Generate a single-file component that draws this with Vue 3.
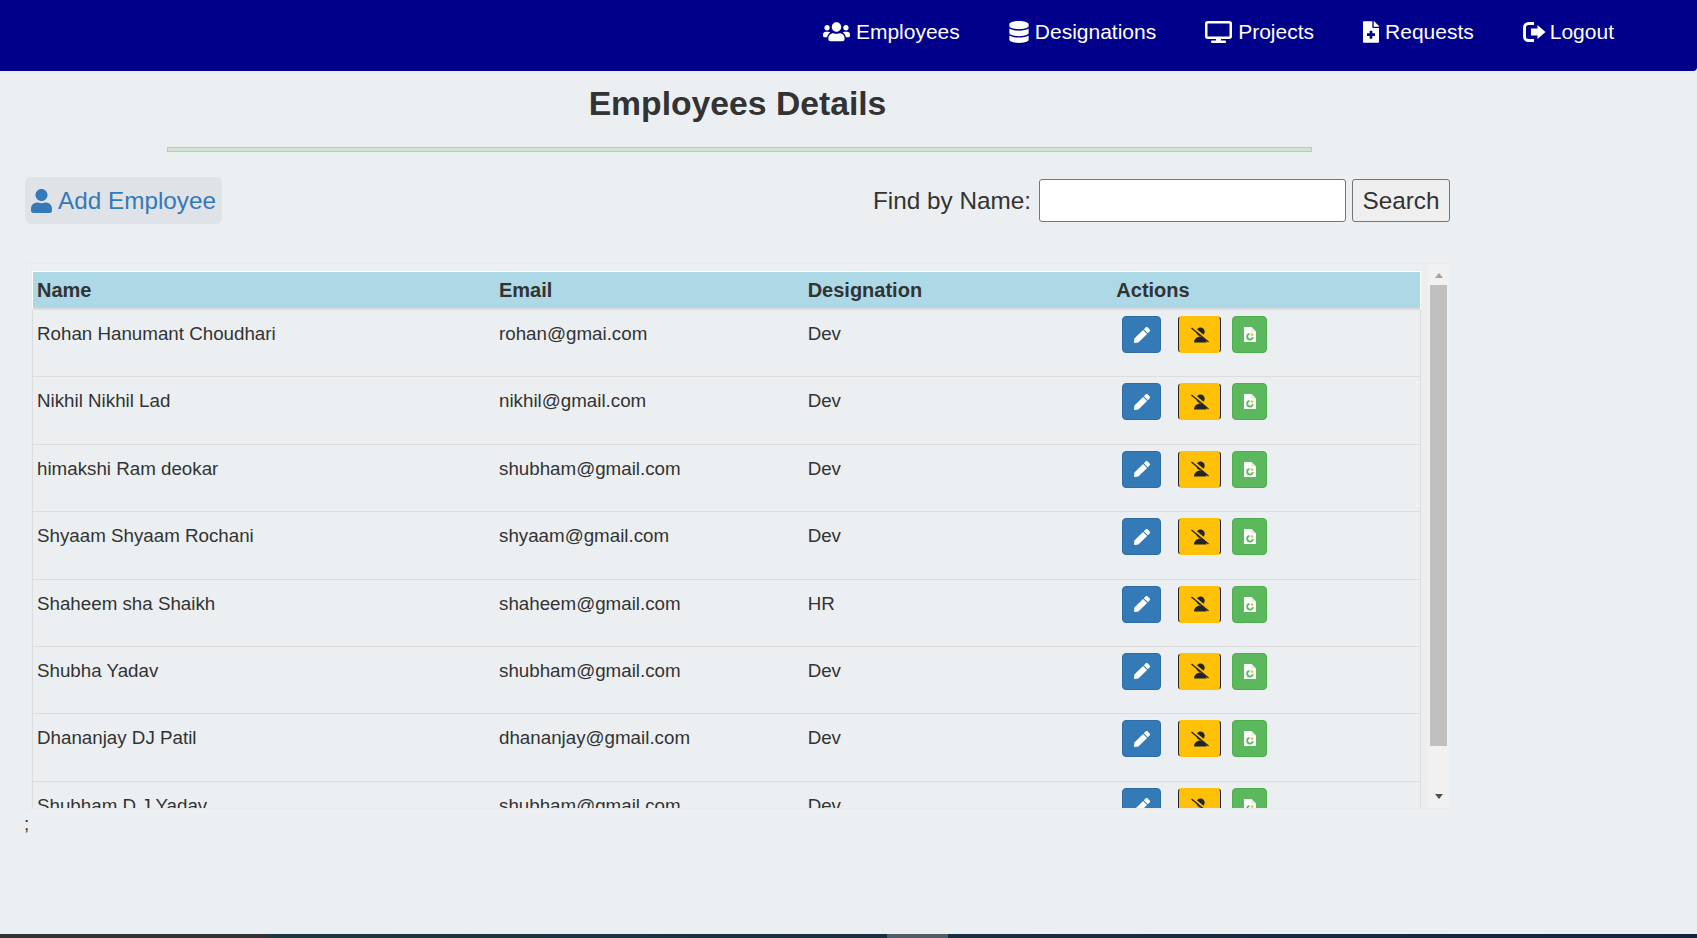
<script setup>
const links = [
  { label: 'Employees', icon: 'users' },
  { label: 'Designations', icon: 'database' },
  { label: 'Projects', icon: 'desktop' },
  { label: 'Requests', icon: 'file' },
  { label: 'Logout', icon: 'logout' }
]
const employees = [
  { name: 'Rohan Hanumant Choudhari', email: 'rohan@gmai.com', role: 'Dev' },
  { name: 'Nikhil Nikhil Lad', email: 'nikhil@gmail.com', role: 'Dev' },
  { name: 'himakshi Ram deokar', email: 'shubham@gmail.com', role: 'Dev' },
  { name: 'Shyaam Shyaam Rochani', email: 'shyaam@gmail.com', role: 'Dev' },
  { name: 'Shaheem sha Shaikh', email: 'shaheem@gmail.com', role: 'HR' },
  { name: 'Shubha Yadav', email: 'shubham@gmail.com', role: 'Dev' },
  { name: 'Dhananjay DJ Patil', email: 'dhananjay@gmail.com', role: 'Dev' },
  { name: 'Shubham D J Yadav', email: 'shubham@gmail.com', role: 'Dev' }
]
</script>

<template>
  <div class="page">
    <nav class="navbar">
      <a v-for="l in links" :key="l.label" class="nav-link">
        <svg v-if="l.icon === 'users'" class="ic-users" viewBox="0 0 640 512"><path fill="currentColor" d="M96 224c35.3 0 64-28.7 64-64s-28.7-64-64-64-64 28.7-64 64 28.7 64 64 64zm448 0c35.3 0 64-28.7 64-64s-28.7-64-64-64-64 28.7-64 64 28.7 64 64 64zm32 32h-64c-17.6 0-33.5 7.1-45.1 18.6 40.3 22.1 68.9 62 75.1 109.4h66c17.7 0 32-14.3 32-32v-32c0-35.3-28.7-64-64-64zm-256 0c61.9 0 112-50.1 112-112S381.9 32 320 32 208 82.1 208 144s50.1 112 112 112zm76.8 32h-8.3c-20.8 10-43.9 16-68.5 16s-47.6-6-68.5-16h-8.3C179.6 288 128 339.6 128 403.2V432c0 26.5 21.5 48 48 48h288c26.5 0 48-21.5 48-48v-28.8c0-63.6-51.6-115.2-115.2-115.2zm-223.7-13.4C161.5 263.1 145.6 256 128 256H64c-35.3 0-64 28.7-64 64v32c0 17.7 14.3 32 32 32h65.9c6.3-47.4 34.9-87.3 75.2-109.4z"/></svg>
        <svg v-else-if="l.icon === 'database'" class="ic-db" viewBox="0 0 448 512"><path fill="currentColor" d="M448 73.143v45.714C448 159.143 347.667 192 224 192S0 159.143 0 118.857V73.143C0 32.857 100.333 0 224 0s224 32.857 224 73.143zM448 176v102.857C448 319.143 347.667 352 224 352S0 319.143 0 278.857V176c48.125 33.143 136.208 48.572 224 48.572S399.874 209.143 448 176zm0 160v102.857C448 479.143 347.667 512 224 512S0 479.143 0 438.857V336c48.125 33.143 136.208 48.572 224 48.572S399.874 369.143 448 336z"/></svg>
        <svg v-else-if="l.icon === 'desktop'" class="ic-desk" viewBox="0 0 27 22"><rect x="1.25" y="1.25" width="24.5" height="15.5" rx="1.5" fill="none" stroke="currentColor" stroke-width="2.5"/><rect x="11" y="17" width="5" height="3" fill="currentColor"/><rect x="6" y="19.5" width="15" height="2.5" rx="1" fill="currentColor"/></svg>
        <svg v-else-if="l.icon === 'file'" class="ic-file" viewBox="0 0 384 512"><path fill="currentColor" d="M377 105L279.1 7c-4.5-4.5-10.6-7-17-7H256v128h128v-6.1c0-6.3-2.5-12.4-7-16.9zm-153 31V0H24C10.7 0 0 10.7 0 24v464c0 13.3 10.7 24 24 24h336c13.3 0 24-10.7 24-24V160H248c-13.2 0-24-10.8-24-24zm64 160v48c0 4.4-3.6 8-8 8h-56v56c0 4.4-3.6 8-8 8h-48c-4.4 0-8-3.6-8-8v-56h-56c-4.4 0-8-3.6-8-8v-48c0-4.4 3.6-8 8-8h56v-56c0-4.4 3.6-8 8-8h48c4.4 0 8 3.6 8 8v56h56c4.4 0 8 3.6 8 8z"/></svg>
        <svg v-else class="ic-out" viewBox="0 0 23 20"><path fill="none" stroke="currentColor" stroke-width="3" d="M11 1.5H5.5a4 4 0 0 0-4 4v9a4 4 0 0 0 4 4H11"/><path fill="currentColor" d="M8 6.500h6.500V3l8 7-8 7v-3.500H8z"/></svg>
        <span>{{ l.label }}</span>
      </a>
    </nav>

    <main class="content">
      <h2 class="title">Employees Details</h2>
      <hr class="rule" />

      <div class="toolbar">
        <a class="add-btn">
          <svg class="ic-user" viewBox="0 0 448 512"><path fill="currentColor" d="M224 256c70.7 0 128-57.3 128-128S294.7 0 224 0 96 57.3 96 128s57.3 128 128 128zm89.6 32h-16.7c-22.2 10.2-46.9 16-72.9 16s-50.6-5.8-72.9-16h-16.7C60.2 288 0 348.2 0 422.4V464c0 26.5 21.5 48 48 48h352c26.5 0 48-21.5 48-48v-41.6c0-74.2-60.2-134.4-134.4-134.4z"/></svg>
          <span>Add Employee</span>
        </a>
        <form class="search" @submit.prevent>
          <label for="find">Find by Name:</label>
          <input id="find" type="text" />
          <button type="submit">Search</button>
        </form>
      </div>

      <div class="table-box">
        <div class="scroller">
          <table class="table">
            <colgroup>
              <col class="c-name" /><col class="c-rest" /><col class="c-rest" /><col class="c-rest" />
            </colgroup>
            <thead>
              <tr><th>Name</th><th>Email</th><th>Designation</th><th>Actions</th></tr>
            </thead>
            <tbody>
              <tr v-for="e in employees" :key="e.name">
                <td>{{ e.name }}</td>
                <td>{{ e.email }}</td>
                <td>{{ e.role }}</td>
                <td>
                  <div class="actions">
                    <button class="act blue">
                      <svg width="16" height="16" viewBox="0 0 512 512"><path fill="#fff" d="M290.74 93.24l128.02 128.02-277.99 277.99-114.14 12.6C11.35 513.54-1.56 500.62.14 485.34l12.7-114.22 277.9-277.88zm207.2-19.06l-60.11-60.11c-18.75-18.75-49.16-18.75-67.91 0l-56.55 56.55 128.02 128.02 56.55-56.55c18.75-18.76 18.75-49.16 0-67.91z"/></svg>
                    </button>
                    <button class="act yellow">
                      <svg width="18" height="16" viewBox="0 0 18 16"><circle cx="9.500" cy="4.800" r="4.200" fill="#212529"/><path fill="#212529" d="M3 15.500c0-3.600 2.800-6 6.500-6s6 2.400 6 6z"/><path stroke="#ffc107" stroke-width="2.600" d="M0 -1L18 14"/><path stroke="#212529" stroke-width="1.300" d="M0.500 1L17.500 15"/></svg>
                    </button>
                    <button class="act green">
                      <svg width="12" height="15" viewBox="0 0 12 15"><path fill="#fff" d="M0 0h7.500L12 4.500V15H0z"/><path fill="#d7efd7" d="M7.500 0L12 4.500H7.500z"/><path fill="none" stroke="#5cb85c" stroke-width="1.800" d="M5.500 6.800a2.900 2.900 0 1 0 3.400 3.400"/><path fill="#d9c64a" d="M6.800 5.800a3.400 3.400 0 0 1 2.900 2.900H6.800z"/></svg>
                    </button>
                  </div>
                </td>
              </tr>
            </tbody>
          </table>
        </div>
        <div class="scrollbar" aria-hidden="true">
          <span class="arrow up"></span>
          <span class="thumb"></span>
          <span class="arrow down"></span>
        </div>
      </div>
      <div class="stray">;</div>
    </main>

    <div class="strip">
      <span class="strip-left"></span>
      <span class="strip-tab"></span>
    </div>
  </div>
</template>

<style>
html, body { margin: 0; background: #ebeff2; }
</style>

<style scoped>
.page {
  height: 938px;
  display: flex;
  flex-direction: column;
  background: #ebeff2;
  color: #333;
  font-family: "Liberation Sans", Arial, sans-serif;
  overflow: hidden;
}
.navbar {
  flex: none;
  height: 71px;
  box-sizing: border-box;
  display: flex;
  justify-content: flex-end;
  align-items: center;
  gap: 49px;
  padding: 0 83px 7px 0;
  background: #00008b;
  border-bottom-right-radius: 4px;
  color: #fff;
}
.nav-link {
  display: flex;
  align-items: center;
  gap: 6px;
  font-size: 21px;
  line-height: 24px;
}
.ic-users { width: 27px; height: 21.6px; }
.ic-db { width: 20px; height: 22px; }
.ic-desk { width: 27px; height: 22px; }
.ic-file { width: 16px; height: 22px; }
.ic-out { width: 23px; height: 20px; margin-right: -2px; }

.content {
  flex: 1;
  box-sizing: border-box;
  width: 1450px;
  padding-left: 25px;
}
.title {
  margin: 14px 0 0;
  text-align: center;
  font-size: 33.7px;
  line-height: 37px;
  font-weight: 700;
  color: #333;
}
.rule {
  box-sizing: border-box;
  width: 1145px;
  height: 5px;
  margin: 25px 0 0 142px;
  border: 1px solid #aed1af;
  background: #d3e3d6;
}
.toolbar {
  display: flex;
  justify-content: space-between;
  align-items: flex-start;
  margin-top: 25px;
}
.add-btn {
  display: flex;
  align-items: center;
  gap: 6px;
  height: 47px;
  box-sizing: border-box;
  padding: 0 6px;
  background: #dfe2e7;
  border-radius: 6px;
  color: #337ab7;
  font-size: 24.3px;
}
.ic-user { width: 21px; height: 24px; }
.search {
  display: flex;
  align-items: center;
  margin-top: 2px;
  font-size: 24.3px;
}
.search label { margin-right: 8px; }
.search input {
  box-sizing: border-box;
  width: 307px;
  height: 43px;
  border: 1px solid #767676;
  border-radius: 3px;
  background: #fff;
  padding: 0;
}
.search button {
  box-sizing: border-box;
  width: 98px;
  height: 43px;
  margin-left: 6px;
  padding: 0;
  border: 1px solid #767676;
  border-radius: 3px;
  background: #efefef;
  color: #333;
  font: inherit;
}
.table-box {
  box-sizing: border-box;
  display: flex;
  width: 1423px;
  height: 546px;
  margin: 39px 0 0 1px;
  border: 1px solid #e8eaec;
  border-right: 0;
}
.scroller {
  flex: 1;
  min-width: 0;
  box-sizing: border-box;
  padding: 7px 7px 0 5px;
  overflow: hidden;
}
.scrollbar {
  flex: none;
  width: 21px;
  box-sizing: border-box;
  display: flex;
  flex-direction: column;
  align-items: center;
  background: #f1f1f1;
}
.thumb {
  width: 17px;
  height: 461px;
  background: #c0c0c0;
}
.arrow {
  flex: none;
  width: 0;
  height: 0;
  border-left: 4.5px solid transparent;
  border-right: 4.5px solid transparent;
}
.up {
  margin: 9px 0 7px;
  border-bottom: 5px solid #a3a3a3;
}
.down {
  margin-top: 48px;
  border-top: 5px solid #505050;
}
.table {
  width: 1389px;
  table-layout: fixed;
  border-collapse: separate;
  border-spacing: 0;
  font-size: 18.75px;
}
.c-name { width: 463px; }
.c-rest { width: 308.67px; }
th {
  box-sizing: border-box;
  height: 39px;
  padding: 0 4px;
  background: #add8e6;
  border-top: 1px solid #fff;
  border-bottom: 2px solid #ddd;
  text-align: left;
  font-size: 20px;
  font-weight: 700;
  line-height: 24px;
  color: #333;
}
th:first-child { border-left: 1px solid #fff; }
th:last-child { border-right: 1px solid #fff; }
td {
  box-sizing: border-box;
  height: 67.4px;
  padding: 10px 4px 0;
  vertical-align: top;
  border-bottom: 1px solid #ddd;
  line-height: 27px;
}
td:first-child { border-left: 1px solid #ddd; }
td:last-child { border-right: 1px solid #ddd; padding-top: 6px; }
.actions {
  display: flex;
  align-items: flex-start;
  padding-left: 6px;
}
.act {
  box-sizing: border-box;
  height: 37px;
  padding: 0;
  display: flex;
  align-items: center;
  justify-content: center;
  border-radius: 4px;
}
.blue { width: 39px; background: #337ab7; border: 1px solid #2e6da4; }
.yellow { width: 43px; margin-left: 17px; background: #ffc107; border: 1px solid #222; border-top-color: #ffc107; border-bottom-color: #ffc107; }
.green { width: 35px; margin-left: 11px; background: #5cb85c; border: 1px solid #4cae4c; }
.stray {
  margin: 1px 0 0 -1px;
  font-size: 18.75px;
  line-height: 27px;
}
.strip {
  flex: none;
  position: relative;
  height: 4px;
  background: linear-gradient(to right, #213c40, #15233f);
}
.strip-left {
  position: absolute;
  left: 0;
  top: 0;
  width: 267px;
  height: 4px;
  background: #333;
}
.strip-tab {
  position: absolute;
  left: 887px;
  top: 0;
  width: 61px;
  height: 4px;
  background: #505c66;
}
</style>
